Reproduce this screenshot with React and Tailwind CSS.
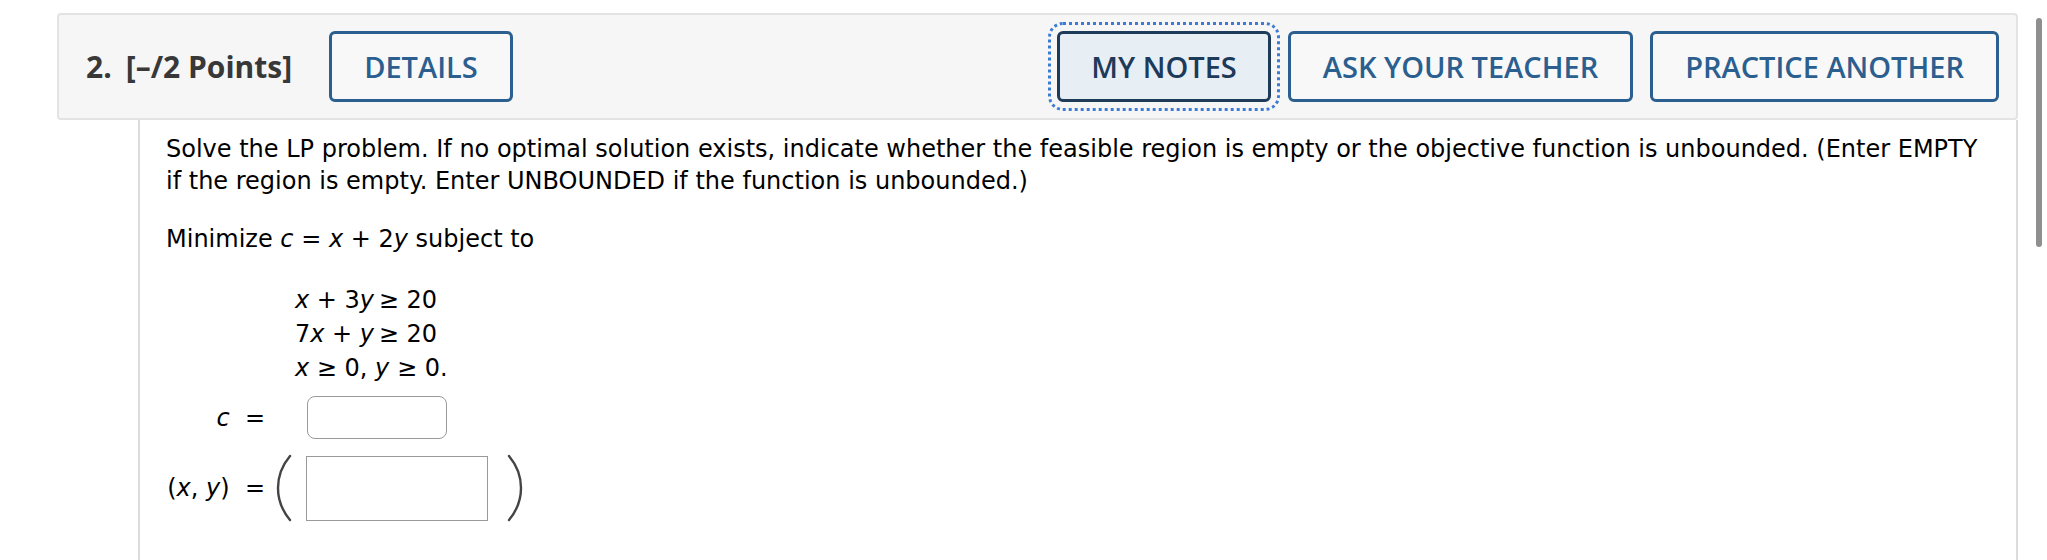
import React from "react";

const blueBtn =
  "h-[71px] rounded-[6px] border-[3px] border-[#2b5f8f] bg-[#f8f8f8] px-[32px] text-[29px] font-semibold text-[#2b5f8f] whitespace-nowrap";

function Paren({ flip }) {
  return (
    <svg width="16" height="68" viewBox="0 0 16 68" className={flip ? "-scale-x-100" : ""}>
      <path
        d="M14 2 C4 14 2 26 2 34 C2 42 4 54 14 66"
        fill="none"
        stroke="#444"
        strokeWidth="2.4"
        strokeLinecap="round"
      />
    </svg>
  );
}

export default function App() {
  return (
    <div className="relative h-[560px] overflow-hidden bg-white">
      <div className="ml-[57px] mt-[13px] w-[1961px]">
        {/* HEADER */}
        <div
          className="flex h-[107px] items-center rounded-[4px] border-2 border-[#e3e3e3] bg-[#f6f6f6] pl-[27px] pr-[17px] text-[#383838]"
          style={{ fontFamily: "'Open Sans', sans-serif" }}
        >
          <span className="text-[30px] font-bold">2.</span>
          <span className="ml-[14px] text-[30px] font-bold">[–/2 Points]</span>
          <button className={`${blueBtn} ml-[37px]`}>DETAILS</button>

          <div className="flex-1" />

          <button className="h-[71px] rounded-[6px] border-[3px] border-[#1e3b59] bg-[#e7eef4] px-[31px] text-[29px] font-semibold text-[#1d3a58] whitespace-nowrap outline-3 outline-dotted outline-offset-[6px] outline-[#3b7bd4]">
            MY NOTES
          </button>
          <button className={`${blueBtn} ml-[17px]`}>ASK YOUR TEACHER</button>
          <button className={`${blueBtn} ml-[17px]`}>PRACTICE ANOTHER</button>
        </div>

        {/* BODY */}
        <div
          className="ml-[81px] h-[460px] border-l-2 border-r-2 border-[#dcdcdc] pl-[26px] pr-[26px] pt-[13px] text-[24px] leading-[32px] text-black"
          style={{ fontFamily: "'DejaVu Sans', Verdana, sans-serif" }}
        >
          <p>
            Solve the LP problem. If no optimal solution exists, indicate whether the feasible region is
            empty or the objective function is unbounded. (Enter EMPTY if the region is empty. Enter
            UNBOUNDED if the function is unbounded.)
          </p>

          <p className="mt-[26px]">
            Minimize <i>c</i> = <i>x</i> + 2<i>y</i> subject to
          </p>

          <div className="ml-[129px] mt-[28px] leading-[34px]">
            <div>
              <i>x</i> + 3<i>y</i>&thinsp;≥ 20
            </div>
            <div>
              7<i>x</i> + <i>y</i>&thinsp;≥ 20
            </div>
            <div>
              <i>x</i> ≥ 0, <i>y</i> ≥ 0.
            </div>
          </div>

          {/* ANSWERS */}
          <div className="mt-[11px] flex items-center">
            <div className="w-[99px] text-right">
              <i>c</i>&nbsp; =
            </div>
            <input className="ml-[42px] h-[43px] w-[140px] rounded-[8px] border-[1.5px] border-[#9a9a9a] bg-white" />
          </div>

          <div className="mt-[15px] flex items-center">
            <div className="w-[99px] whitespace-nowrap text-right">
              (<i>x</i>, <i>y</i>)&nbsp; =
            </div>
            <div className="ml-[11px] flex items-center">
              <Paren />
              <input className="ml-[14px] h-[65px] w-[182px] border-[1.5px] border-[#9a9a9a] bg-white" />
              <div className="ml-[19px]">
                <Paren flip />
              </div>
            </div>
          </div>
        </div>
      </div>

      {/* scrollbar */}
      <div className="absolute left-[2036px] top-[18px] h-[229px] w-[6px] rounded-full bg-[#8f8f8f]" />
    </div>
  );
}
